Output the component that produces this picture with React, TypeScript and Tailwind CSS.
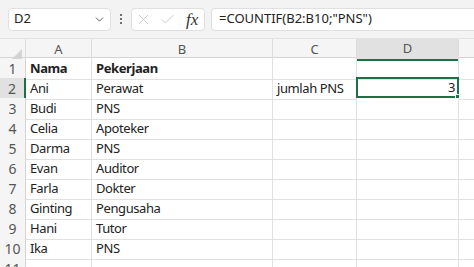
import { ChevronDown, X, Check } from 'lucide-react';

const ROWS: Array<[string, string, string, string]> = [
  ['Nama', 'Pekerjaan', '', ''],
  ['Ani', 'Perawat', 'jumlah PNS', '3'],
  ['Budi', 'PNS', '', ''],
  ['Celia', 'Apoteker', '', ''],
  ['Darma', 'PNS', '', ''],
  ['Evan', 'Auditor', '', ''],
  ['Farla', 'Dokter', '', ''],
  ['Ginting', 'Pengusaha', '', ''],
  ['Hani', 'Tutor', '', ''],
  ['Ika', 'PNS', '', ''],
  ['', '', '', ''],
];

const COLS = 'grid grid-cols-[26px_66px_181px_84px_102px_1fr]';

export default function App() {
  return (
    <div
      className="h-[267px] w-[474px] overflow-hidden bg-white text-[13px] text-[#222]"
      style={{ fontFamily: '"Noto Sans", "Open Sans", sans-serif' }}
    >
      {/* formula bar */}
      <div className="flex h-[39px] items-center border-b border-[#e2e2e2] bg-[#f3f3f3] pl-[8px]">
        <div className="flex h-[23px] w-[103px] items-center justify-between rounded-[4px] border border-[#e0e0e0] bg-white pl-[5px] pr-[4px] text-[13px]">
          <span>D2</span>
          <ChevronDown size={13} strokeWidth={1.6} className="text-[#444]" />
        </div>
        <div className="mx-[9px] flex flex-col gap-[2px]">
          <span className="h-[2px] w-[2px] rounded-full bg-[#444]" />
          <span className="h-[2px] w-[2px] rounded-full bg-[#444]" />
          <span className="h-[2px] w-[2px] rounded-full bg-[#444]" />
        </div>
        <div className="flex h-[23px] w-[74px] items-center gap-[7px] rounded-[4px] border border-[#e0e0e0] bg-white pl-[3px] text-[#bdbdbd]">
          <X size={17} strokeWidth={1.1} />
          <Check size={17} strokeWidth={1.1} />
          <span
            className="ml-[3px] text-[17px] italic leading-none text-[#333]"
            style={{ fontFamily: '"Liberation Serif", serif' }}
          >
            fx
          </span>
        </div>
        <div className="ml-[6px] flex h-[23px] flex-1 items-center rounded-l-[4px] border border-r-0 border-[#e0e0e0] bg-white pl-[7px] text-[13px]">
          =COUNTIF(B2:B10;"PNS")
        </div>
      </div>

      {/* column headers */}
      <div className={`${COLS} h-[19px] border-b border-[#d4d4d4] bg-[#f5f5f5] text-[13px] text-[#555]`}>
        <div className="relative border-r border-[#dcdcdc]">
          <svg className="absolute bottom-[2px] right-[3px]" width="10" height="10" viewBox="0 0 10 10">
            <path d="M10 0 L10 10 L0 10 Z" fill="#d3d3d3" />
          </svg>
        </div>
        <div className="flex items-center justify-center border-r border-[#dcdcdc]">A</div>
        <div className="flex items-center justify-center border-r border-[#dcdcdc]">B</div>
        <div className="flex items-center justify-center border-r border-[#dcdcdc]">C</div>
        <div className="flex items-center justify-center border-b-2 border-r border-b-[#1e7145] border-r-[#dcdcdc] bg-[#e1e1e1]">
          D
        </div>
        <div />
      </div>

      {/* rows */}
      {ROWS.map((r, i) => {
        const sel = i === 1;
        return (
          <div key={i} className={`${COLS} h-[20px] tracking-[-0.4px]`}>
            <div
              className={`flex items-center justify-center border-b border-r text-[14px] tracking-normal text-[#555] ${
                sel ? 'border-b-[#d4d4d4] border-r-2 border-r-[#1e7145] bg-[#e1e1e1]' : 'border-[#d4d4d4] bg-[#f5f5f5]'
              }`}
            >
              {i + 1}
            </div>
            <div className={`flex items-center border-b border-r border-[#e1e1e1] pl-[4px] ${i === 0 ? 'font-bold' : ''}`}>
              {r[0]}
            </div>
            <div className={`flex items-center border-b border-r border-[#e1e1e1] pl-[4px] ${i === 0 ? 'font-bold' : ''}`}>
              {r[1]}
            </div>
            <div className="flex items-center border-b border-r border-[#e1e1e1] pl-[4px]">{r[2]}</div>
            {sel ? (
              <div className="relative -ml-px -mt-px flex h-[21px] w-[103px] items-center justify-end border-2 border-[#1e7145] pr-[2px]">
                {r[3]}
                <span className="absolute -bottom-[3px] -right-[3px] h-[5px] w-[5px] border border-white bg-[#1e7145]" />
              </div>
            ) : (
              <div className="border-b border-r border-[#e1e1e1]" />
            )}
            <div className="border-b border-[#e1e1e1]" />
          </div>
        );
      })}
    </div>
  );
}
